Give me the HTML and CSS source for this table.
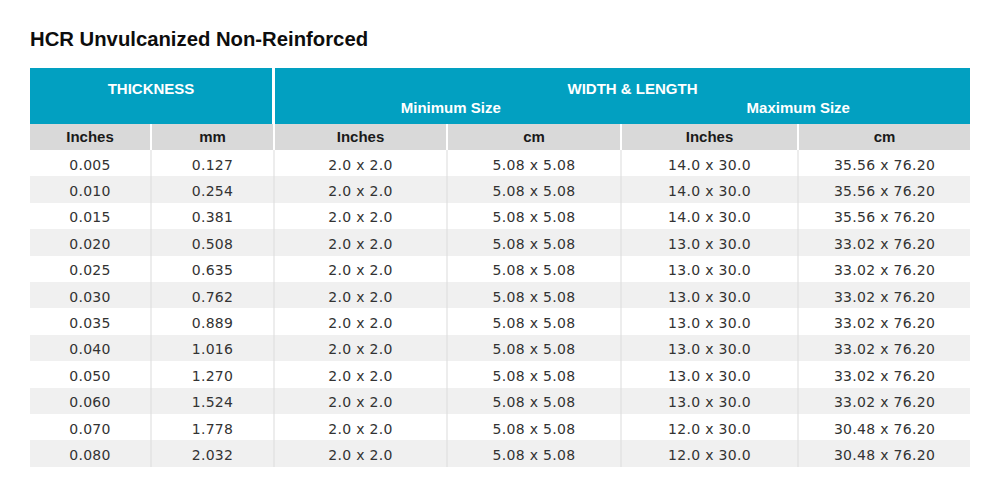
FILE: index.html
```html
<!DOCTYPE html>
<html>
<head>
<meta charset="utf-8">
<link rel="stylesheet" href="styles.css">
</head>
<body>
<div class="page">
  <h1 class="title">HCR Unvulcanized Non-Reinforced</h1>
  <table class="spec">
    <colgroup>
      <col class="c1"><col class="c2"><col class="c3"><col class="c4"><col class="c5"><col class="c6">
    </colgroup>
    <thead>
      <tr class="band">
        <th colspan="2" class="group">THICKNESS</th>
        <th colspan="4" class="group last">
          <div class="group-title">WIDTH &amp; LENGTH</div>
          <div class="halves"><span>Minimum Size</span><span>Maximum Size</span></div>
        </th>
      </tr>
      <tr class="units">
        <th>Inches</th><th>mm</th><th>Inches</th><th>cm</th><th>Inches</th><th class="last">cm</th>
      </tr>
    </thead>
    <tbody>
      <tr><td>0.005</td><td>0.127</td><td>2.0 x 2.0</td><td>5.08 x 5.08</td><td>14.0 x 30.0</td><td class="last">35.56 x 76.20</td></tr>
      <tr><td>0.010</td><td>0.254</td><td>2.0 x 2.0</td><td>5.08 x 5.08</td><td>14.0 x 30.0</td><td class="last">35.56 x 76.20</td></tr>
      <tr><td>0.015</td><td>0.381</td><td>2.0 x 2.0</td><td>5.08 x 5.08</td><td>14.0 x 30.0</td><td class="last">35.56 x 76.20</td></tr>
      <tr><td>0.020</td><td>0.508</td><td>2.0 x 2.0</td><td>5.08 x 5.08</td><td>13.0 x 30.0</td><td class="last">33.02 x 76.20</td></tr>
      <tr><td>0.025</td><td>0.635</td><td>2.0 x 2.0</td><td>5.08 x 5.08</td><td>13.0 x 30.0</td><td class="last">33.02 x 76.20</td></tr>
      <tr><td>0.030</td><td>0.762</td><td>2.0 x 2.0</td><td>5.08 x 5.08</td><td>13.0 x 30.0</td><td class="last">33.02 x 76.20</td></tr>
      <tr><td>0.035</td><td>0.889</td><td>2.0 x 2.0</td><td>5.08 x 5.08</td><td>13.0 x 30.0</td><td class="last">33.02 x 76.20</td></tr>
      <tr><td>0.040</td><td>1.016</td><td>2.0 x 2.0</td><td>5.08 x 5.08</td><td>13.0 x 30.0</td><td class="last">33.02 x 76.20</td></tr>
      <tr><td>0.050</td><td>1.270</td><td>2.0 x 2.0</td><td>5.08 x 5.08</td><td>13.0 x 30.0</td><td class="last">33.02 x 76.20</td></tr>
      <tr><td>0.060</td><td>1.524</td><td>2.0 x 2.0</td><td>5.08 x 5.08</td><td>13.0 x 30.0</td><td class="last">33.02 x 76.20</td></tr>
      <tr><td>0.070</td><td>1.778</td><td>2.0 x 2.0</td><td>5.08 x 5.08</td><td>12.0 x 30.0</td><td class="last">30.48 x 76.20</td></tr>
      <tr><td>0.080</td><td>2.032</td><td>2.0 x 2.0</td><td>5.08 x 5.08</td><td>12.0 x 30.0</td><td class="last">30.48 x 76.20</td></tr>
    </tbody>
  </table>
</div>
</body>
</html>
```

FILE: styles.css
```css
html, body {
  margin: 0;
  padding: 0;
  background: #ffffff;
}

.page {
  padding: 27px 30px 0 30px;
}

.title {
  margin: 0 0 17px 0;
  font-family: "Liberation Sans", Arial, sans-serif;
  font-weight: bold;
  font-size: 20.3px;
  line-height: 24px;
  color: #0d0d0d;
}

.spec {
  width: 940px;
  table-layout: fixed;
  border-collapse: separate;
  border-spacing: 0;
}

.c1 { width: 122px; }
.c2 { width: 123px; }
.c3 { width: 173px; }
.c4 { width: 174px; }
.c5 { width: 177px; }
.c6 { width: 171px; }

.spec th,
.spec td {
  padding: 0;
  text-align: center;
  border-right: 2px solid #ffffff;
}

.spec .last {
  border-right: none;
}

.band .group {
  background: #02a0c1;
  color: #ffffff;
  height: 56px;
  vertical-align: top;
  padding-top: 11px;
  box-sizing: border-box;
  font-family: "Liberation Sans", Arial, sans-serif;
  font-weight: bold;
  font-size: 15px;
  line-height: 19px;
  border-right-width: 3px;
}

.band .group.last {
  border-right: none;
}

.group-title {
  padding-left: 20px;
}

.halves {
  display: grid;
  grid-template-columns: 1fr 1fr;
}

.halves span:first-child {
  padding-left: 4px;
}

.halves span:last-child {
  padding-left: 4px;
}

.units th {
  background: #d9d9d9;
  color: #1a1a1a;
  height: 26px;
  font-family: "Liberation Sans", Arial, sans-serif;
  font-weight: bold;
  font-size: 15px;
  line-height: 18px;
}

.spec td {
  height: 23.4px;
  padding-top: 3px;
  font-family: "DejaVu Sans", Verdana, sans-serif;
  font-size: 14px;
  letter-spacing: 0.3px;
  line-height: 16px;
  color: #333333;
  border-right-color: #ededed;
}

.spec tbody tr:nth-child(even) td {
  background: #f0f0f0;
  border-right-color: #e6e6e6;
}
```
